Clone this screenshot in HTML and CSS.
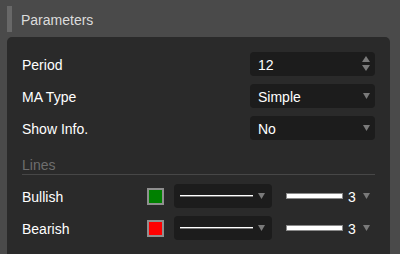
FILE: index.html
```html
<!DOCTYPE html>
<html lang="en">
<head>
    <meta charset="UTF-8">
    <meta name="viewport" content="width=device-width, initial-scale=1.0">
    <title>Parameters</title>
    <link rel="stylesheet" href="styles.css">
</head>
<body>

    <div class="header">
        <span class="accent"></span>
        <span class="title">Parameters</span>
    </div>

    <div class="panel">
        <div class="row">
            <span class="label">Period</span>
            <div class="field">
                <span class="value">12</span>
                <svg class="spin" width="8" height="16" viewBox="0 0 8 16">
                    <polygon points="4,0 8,6 0,6" />
                    <polygon points="0,9 8,9 4,15" />
                </svg>
            </div>
        </div>
        <div class="row">
            <span class="label">MA Type</span>
            <div class="field">
                <span class="value">Simple</span>
                <svg class="arrow" width="7" height="6" viewBox="0 0 7 6"><polygon points="0,0 7,0 3.5,6" /></svg>
            </div>
        </div>
        <div class="row">
            <span class="label">Show Info.</span>
            <div class="field">
                <span class="value">No</span>
                <svg class="arrow" width="7" height="6" viewBox="0 0 7 6"><polygon points="0,0 7,0 3.5,6" /></svg>
            </div>
        </div>

        <div class="section">Lines</div>

        <div class="row">
            <span class="label">Bullish</span>
            <span class="swatch green"></span>
            <div class="style-select">
                <span class="style-line"></span>
                <svg class="arrow" width="7" height="6" viewBox="0 0 7 6"><polygon points="0,0 7,0 3.5,6" /></svg>
            </div>
            <div class="width-select">
                <span class="width-bar"></span>
                <span class="width-num">3</span>
                <svg class="arrow" width="7" height="6" viewBox="0 0 7 6"><polygon points="0,0 7,0 3.5,6" /></svg>
            </div>
        </div>
        <div class="row">
            <span class="label">Bearish</span>
            <span class="swatch red"></span>
            <div class="style-select">
                <span class="style-line"></span>
                <svg class="arrow" width="7" height="6" viewBox="0 0 7 6"><polygon points="0,0 7,0 3.5,6" /></svg>
            </div>
            <div class="width-select">
                <span class="width-bar"></span>
                <span class="width-num">3</span>
                <svg class="arrow" width="7" height="6" viewBox="0 0 7 6"><polygon points="0,0 7,0 3.5,6" /></svg>
            </div>
        </div>
    </div>

</body>
</html>
```

FILE: styles.css
```css
/* General Styling */
body {
    margin: 0;
    font-family: "Liberation Sans", Arial, sans-serif;
    font-size: 14px;
    background-color: #4a4a4a;
    color: #ffffff;
    overflow: hidden;
}

.header {
    height: 37px;
    padding-left: 7px;
    display: flex;
    align-items: center;
}

.accent {
    width: 5px;
    height: 26px;
    background: #686868;
}

.title {
    margin-left: 9px;
    padding-top: 2px;
    font-size: 14px;
    color: #dcdcdc;
}

.panel {
    margin-left: 7px;
    width: 353px;
    height: 202px;
    padding: 15px 15px 0 15px;
    background: #2a2a2a;
    border-radius: 5px 5px 0 0;
}

.row {
    display: flex;
    align-items: center;
    height: 24px;
    margin-bottom: 8px;
}

.label {
    flex: 1;
    padding-top: 2px;
}

.value,
.width-num {
    padding-top: 2px;
}

.field {
    width: 125px;
    height: 24px;
    box-sizing: border-box;
    padding: 0 5px 0 8px;
    background: #1c1c1c;
    border-radius: 4px;
    display: flex;
    align-items: center;
    justify-content: space-between;
}

.arrow,
.spin {
    fill: #7a7a7a;
}

.section {
    margin-top: 14px;
    padding-top: 2px;
    line-height: 18px;
    border-bottom: 1px solid #474747;
    color: #6e6e6e;
    margin-bottom: 9px;
}

.swatch {
    width: 13px;
    height: 13px;
    border: 2px solid #8f8f8f;
    margin-right: 10px;
}

.green {
    background: #008000;
}

.red {
    background: #ff0000;
}

.style-select {
    width: 98px;
    height: 24px;
    box-sizing: border-box;
    padding: 0 7px 0 6px;
    background: #1c1c1c;
    border-radius: 4px;
    display: flex;
    align-items: center;
    justify-content: space-between;
}

.style-line {
    width: 73px;
    height: 1px;
    background: #ffffff;
    border-bottom: 1px solid #777777;
}

.width-select {
    margin-left: 14px;
    width: 89px;
    display: flex;
    align-items: center;
}

.width-bar {
    width: 55px;
    height: 4px;
    background: #ffffff;
    border: 1px solid #8a8a8a;
}

.width-num {
    margin-left: 5px;
    width: 15px;
}
```
